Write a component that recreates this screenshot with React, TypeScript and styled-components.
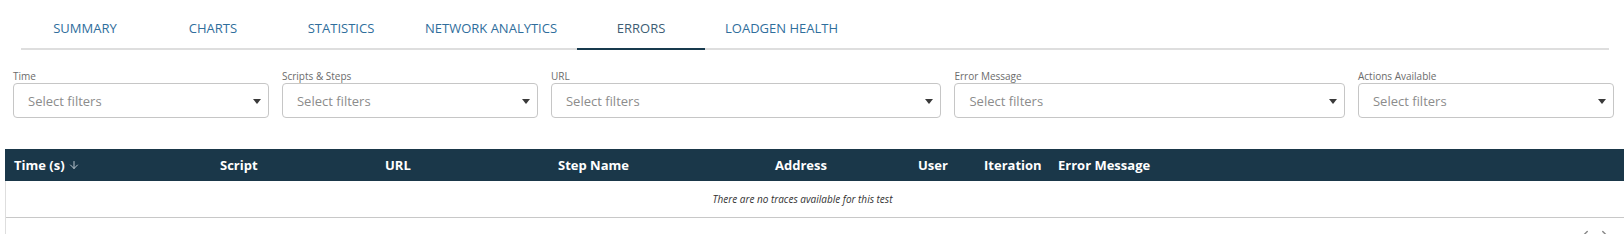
import React, { FC } from "react";
import styled, { createGlobalStyle } from "styled-components";
import { ArrowDown, ChevronLeft, ChevronRight } from "lucide-react";

const GlobalStyle = createGlobalStyle`
  body {
    margin: 0;
    background: #ffffff;
    font-family: "Open Sans", "Liberation Sans", sans-serif;
    overflow: hidden;
  }
  * {
    box-sizing: border-box;
  }
`;

const TABS = [
  "Summary",
  "Charts",
  "Statistics",
  "Network Analytics",
  "Errors",
  "Loadgen Health",
];

const FILTERS = [
  { label: "Time", span: 2 },
  { label: "Scripts & Steps", span: 2 },
  { label: "URL", span: 3 },
  { label: "Error Message", span: 3 },
  { label: "Actions Available", span: 2 },
];

const COLUMNS = [
  { title: "Time (s)", width: 206, sorted: true },
  { title: "Script", width: 165 },
  { title: "URL", width: 173 },
  { title: "Step Name", width: 217 },
  { title: "Address", width: 143 },
  { title: "User", width: 66 },
  { title: "Iteration", width: 74 },
  { title: "Error Message", width: 0 },
];

const Page = styled.div`
  width: 100%;
`;

const TabsBar = styled.nav`
  display: flex;
  margin: 8px 15px 0 21px;
  border-bottom: 2px solid #dedede;
`;

const Tab = styled.div<{ $active?: boolean }>`
  position: relative;
  min-width: 128px;
  height: 40px;
  padding: 0 20px;
  display: flex;
  align-items: center;
  justify-content: center;
  font-size: 13px;
  text-transform: uppercase;
  white-space: nowrap;
  color: ${(p) => (p.$active ? "#3d5d74" : "#2f6e9c")};
  cursor: pointer;

  &::after {
    content: "";
    display: ${(p) => (p.$active ? "block" : "none")};
    position: absolute;
    left: 0;
    right: 0;
    bottom: -2px;
    height: 2px;
    background: #183a4e;
  }
`;

const FilterRow = styled.div`
  display: flex;
  width: calc(100% - 10px);
  margin-top: 19px;
`;

const FilterItem = styled.div<{ $span: number }>`
  flex: 0 0 ${(p) => (p.$span / 12) * 100}%;
  padding-left: 13px;
`;

const FilterLabel = styled.div`
  font-size: 10px;
  line-height: 14px;
  color: #6b6b6b;
  white-space: nowrap;
`;

const SelectBox = styled.div`
  height: 35px;
  border: 1px solid #c6c6c6;
  border-radius: 4px;
  display: flex;
  align-items: center;
  justify-content: space-between;
  padding: 0 7px 0 14px;
  background: #fff;
`;

const Placeholder = styled.span`
  font-size: 13px;
  color: #8c8c8c;
`;

const Caret = styled.span`
  width: 0;
  height: 0;
  border-left: 4px solid transparent;
  border-right: 4px solid transparent;
  border-top: 5px solid #3a3a3a;
  margin-top: 1px;
`;

const Table = styled.div`
  margin: 31px 0 0 5px;
  border-left: 1px solid #dedede;
`;

const HeaderRow = styled.div`
  display: flex;
  height: 32px;
  background: #1a3749;
  margin-left: -1px;
`;

const HeaderCell = styled.div<{ $width: number }>`
  flex: ${(p) => (p.$width ? `0 0 ${p.$width}px` : "1 1 auto")};
  display: flex;
  align-items: center;
  gap: 3px;
  padding-left: 9px;
  font-size: 13px;
  font-weight: 700;
  color: #ffffff;
  white-space: nowrap;
`;

const SortIcon = styled(ArrowDown)`
  color: #b9c5ce;
`;

const EmptyRow = styled.div`
  height: 37px;
  display: flex;
  align-items: center;
  justify-content: center;
  padding-right: 25px;
  border-bottom: 1px solid #c8c8c8;
  font-size: 10px;
  font-style: italic;
  color: #333333;
`;

const Pagination = styled.div`
  display: flex;
  justify-content: flex-end;
  gap: 2px;
  padding: 9px 10px 0 0;
  color: #8a8a8a;
`;

const Tabs: FC<{ active: string }> = ({ active }) => (
  <TabsBar>
    {TABS.map((t) => (
      <Tab key={t} $active={t === active}>
        {t}
      </Tab>
    ))}
  </TabsBar>
);

const Filters: FC = () => (
  <FilterRow>
    {FILTERS.map((f) => (
      <FilterItem key={f.label} $span={f.span}>
        <FilterLabel>{f.label}</FilterLabel>
        <SelectBox>
          <Placeholder>Select filters</Placeholder>
          <Caret />
        </SelectBox>
      </FilterItem>
    ))}
  </FilterRow>
);

const ErrorsTable: FC = () => (
  <Table>
    <HeaderRow>
      {COLUMNS.map((c) => (
        <HeaderCell key={c.title} $width={c.width}>
          {c.title}
          {c.sorted && <SortIcon size={12} strokeWidth={2} />}
        </HeaderCell>
      ))}
    </HeaderRow>
    <EmptyRow>There are no traces available for this test</EmptyRow>
    <Pagination>
      <ChevronLeft size={18} />
      <ChevronRight size={18} />
    </Pagination>
  </Table>
);

const App: FC = () => (
  <Page>
    <GlobalStyle />
    <Tabs active="Errors" />
    <Filters />
    <ErrorsTable />
  </Page>
);

export default App;
